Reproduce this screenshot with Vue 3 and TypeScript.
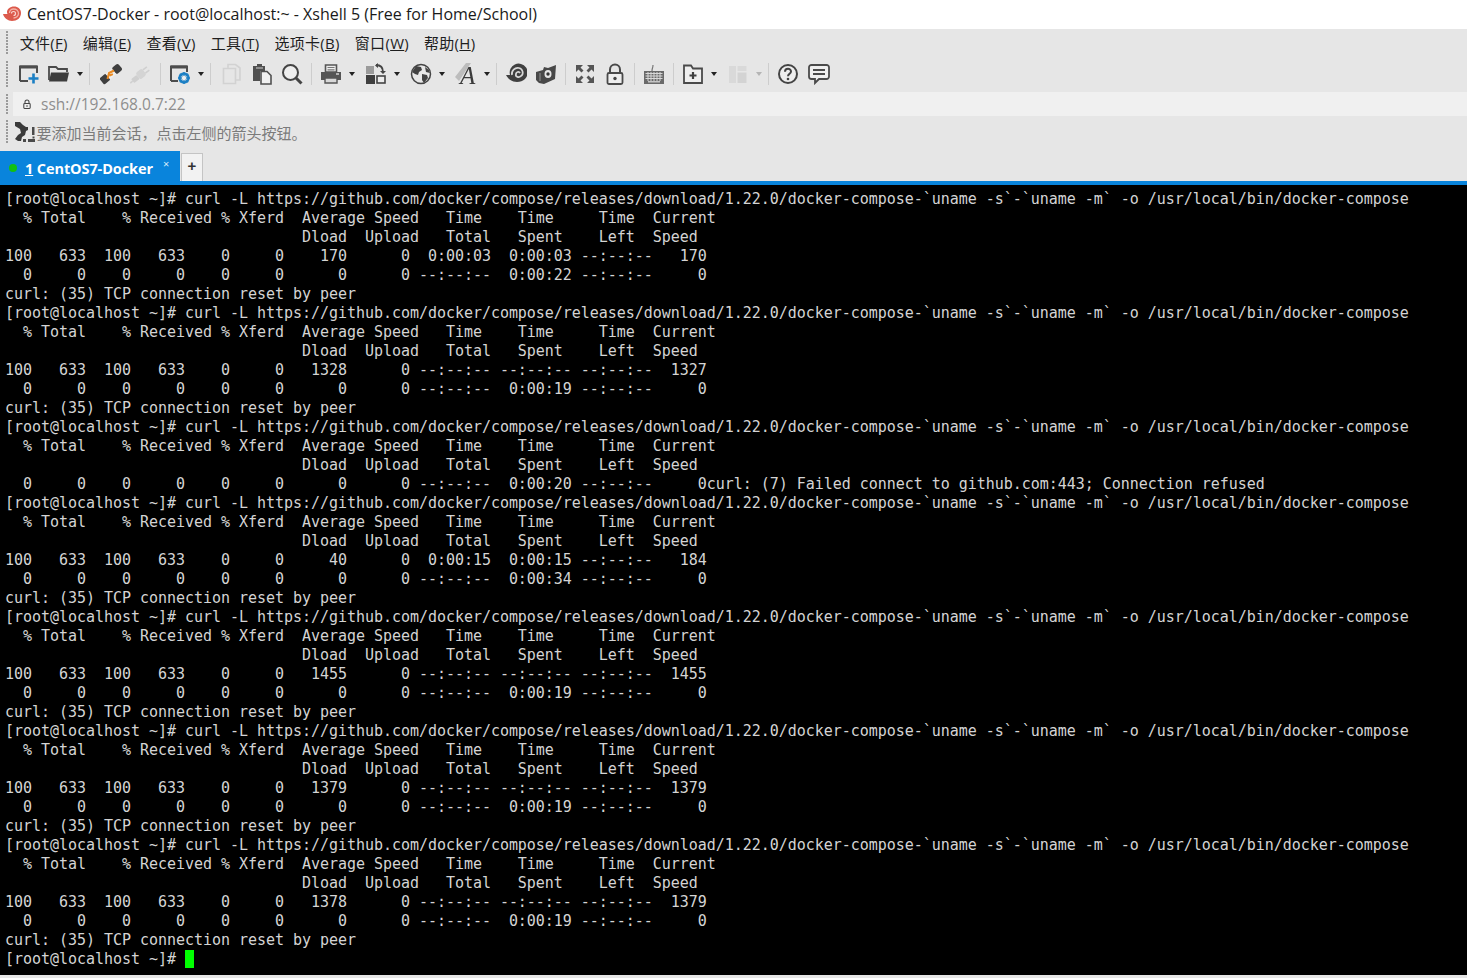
<script setup lang="ts">
const cmd = "[root@localhost ~]# curl -L https://github.com/docker/compose/releases/download/1.22.0/docker-compose-`uname -s`-`uname -m` -o /usr/local/bin/docker-compose";
const h1 = "  % Total    % Received % Xferd  Average Speed   Time    Time     Time  Current";
const h2 = "                                 Dload  Upload   Total   Spent    Left  Speed";
const reset = "curl: (35) TCP connection reset by peer";

function full(dl: string, a: string, b: string, cur: string): string {
  return "100   633  100   633    0     0 " + dl.padStart(6) + "      0 " + a + " " + b + " --:--:-- " + cur.padStart(5);
}
function zero(spent: string): string {
  return "  0     0    0     0    0     0      0      0 --:--:--  " + spent + " --:--:--     0";
}

const none = "--:--:--";
const lines: string[] = [
  cmd, h1, h2, full("170", " 0:00:03", " 0:00:03", "170"), zero("0:00:22"), reset,
  cmd, h1, h2, full("1328", none, none, "1327"), zero("0:00:19"), reset,
  cmd, h1, h2, zero("0:00:20") + "curl: (7) Failed connect to github.com:443; Connection refused",
  cmd, h1, h2, full("40", " 0:00:15", " 0:00:15", "184"), zero("0:00:34"), reset,
  cmd, h1, h2, full("1455", none, none, "1455"), zero("0:00:19"), reset,
  cmd, h1, h2, full("1379", none, none, "1379"), zero("0:00:19"), reset,
  cmd, h1, h2, full("1378", none, none, "1379"), zero("0:00:19"), reset,
];

const menus: { label: string; key: string }[] = [
  { label: "文件", key: "F" },
  { label: "编辑", key: "E" },
  { label: "查看", key: "V" },
  { label: "工具", key: "T" },
  { label: "选项卡", key: "B" },
  { label: "窗口", key: "W" },
  { label: "帮助", key: "H" },
];
</script>

<template>
  <div class="app">
    <header class="title">
      <svg class="logo" width="20" height="16" viewBox="0 0 20 16">
        <path d="M1 8c1 4 5 7 9 7 5 0 9-3 9-8 0-4-3-6.500-7-6.500C8 .5 5 3 5 6c0 .8 .2 1.400 .5 2z" fill="#dc5a4c" />
        <path d="M7.500 7c0-3 2-4 4-4 3 0 5 2 5 4.500S14 12 11.500 12" fill="none" stroke="#f4b3a8" stroke-width="1.300" />
        <path d="M9.500 7.500c0-1.500 1-2 2-2s2 .8 2 2-1 2-2 2" fill="none" stroke="#f8d8d2" stroke-width="1.200" />
      </svg>
      <span>CentOS7-Docker - root@localhost:~ - Xshell 5 (Free for Home/School)</span>
    </header>

    <nav class="menu">
      <i class="handle"></i>
      <span v-for="m in menus" :key="m.key" class="menu-item">{{ m.label }}(<u>{{ m.key }}</u>)</span>
    </nav>

    <div class="toolbar">
      <i class="handle"></i>
      <div class="tools">
        <span class="t"><svg viewBox="0 0 22 22"><path d="M2 18V3.500h17V10M2 18h8" fill="none" stroke="#4d4d4d" stroke-width="2" /><path d="M2 4h17" stroke="#4d4d4d" stroke-width="3" /><path d="M15.500 10.500v10M10.500 15.500h10" stroke="#1b7fc4" stroke-width="2.600" /></svg></span>
        <span class="t"><svg viewBox="0 0 22 22"><path d="M1 17V4h7l2 2h9v3" fill="none" stroke="#4a4a4a" stroke-width="1.800" /><path d="M3 9.500h18l-2 9H1z" fill="#3d3d3d" /></svg></span>
        <span class="c"></span><span class="s w"></span>
        <span class="t"><svg viewBox="0 0 22 22"><g transform="rotate(-40 11 11)"><rect x="-1" y="7" width="8" height="8" rx="1.500" fill="#3f3f3f" /><rect x="15" y="7" width="8" height="8" rx="2" fill="#3f3f3f" /><rect x="7" y="7.500" width="8" height="7" fill="#efefef" /></g><path d="M7.500 16l1.500-6 5-2.500M9.500 12.500l3.400-1.400" fill="none" stroke="#e98a23" stroke-width="2" /></svg></span>
        <span class="t off"><svg viewBox="0 0 22 22"><g transform="rotate(-38 11 11)"><rect x="0" y="9" width="7" height="5" rx="1" fill="#cfcfcf" /><rect x="7" y="7" width="8" height="8" rx="2" fill="#d4d4d4" /><path d="M15 9h5M15 13h5M0 11.500h-3" stroke="#d0d0d0" stroke-width="1.600" /></g></svg></span>
        <span class="s"></span>
        <span class="t"><svg viewBox="0 0 22 22"><path d="M2 18V3.500h16V9M2 18h7" fill="none" stroke="#4d4d4d" stroke-width="2" /><path d="M2 4h16" stroke="#4d4d4d" stroke-width="3" /><circle cx="15" cy="15" r="4.500" fill="none" stroke="#1b7fc4" stroke-width="2.400" /><path d="M15 9v12M9 15h12M10.800 10.800l8.400 8.400M19.200 10.800l-8.400 8.400" stroke="#1b7fc4" stroke-width="1.400" /><circle cx="15" cy="15" r="2.200" fill="#eee" /></svg></span>
        <span class="c"></span><span class="s w"></span>
        <span class="t off"><svg viewBox="0 0 22 22"><path d="M7 5V1.500h7.500L19 5v12h-4" fill="none" stroke="#d2d2d2" stroke-width="1.600" /><path d="M2.500 5.500H14.500V20.500H2.500z" fill="#e6e6e6" stroke="#d2d2d2" stroke-width="1.600" /></svg></span>
        <span class="t"><svg viewBox="0 0 22 22"><path d="M4 3h2V1h5v2h3v5H9v10H2V3z" fill="#505050" /><path d="M5 5h7" stroke="#bbb" stroke-width="1.200" /><path d="M10 8.500h6l4 4v8.500H10z" fill="#f1f1f1" stroke="#505050" stroke-width="1.600" /></svg></span>
        <span class="t"><svg viewBox="0 0 22 22"><circle cx="9.500" cy="9.500" r="7.500" fill="#eeeeee" stroke="#444" stroke-width="2" /><path d="M15 15l5.500 5.500" stroke="#444" stroke-width="3" /></svg></span>
        <span class="s"></span>
        <span class="t"><svg viewBox="0 0 22 22"><path d="M5.500 2h11v7h-11z" fill="#ececec" stroke="#555" stroke-width="1.600" /><path d="M7.500 4.500h7M7.500 6.800h7" stroke="#777" stroke-width="1.200" /><path d="M1 9h20v8H1z" fill="#555" /><path d="M5 15h12v5H5z" fill="#d8d8d8" stroke="#555" stroke-width="1.400" /><path d="M16 11h3" stroke="#ddd" stroke-width="1.400" /></svg></span>
        <span class="c"></span><i class="g"></i>
        <span class="t"><svg viewBox="0 0 22 22"><rect x="1" y="3" width="8" height="8" fill="#9b9b9b" /><rect x="1" y="12" width="9" height="9" fill="#3f3f3f" /><rect x="12" y="13" width="8" height="7" fill="#ececec" stroke="#444" stroke-width="1.600" /><path d="M11 2c4 0 7 2 7 7" fill="none" stroke="#444" stroke-width="1.800" /><path d="M15 8l3 3 3-3zM13 0v5l-3-2.500z" fill="#444" /></svg></span>
        <span class="c"></span><i class="g"></i>
        <span class="t"><svg viewBox="0 0 22 22"><circle cx="11" cy="11" r="9.500" fill="#e8e8e8" stroke="#444" stroke-width="1.500" /><path d="M6 3l5 1 1 3-3 2-1 3-3-1-3-2zM12 11l5 1 1 3-4 5-2-3zM15 4l4 3 1 3-4-1z" fill="#434343" /></svg></span>
        <span class="c"></span><i class="g"></i>
        <span class="t ta"><svg viewBox="0 0 22 22"><path d="M0 14L11 0h5L4 18z" fill="#bdbdbd" /><text x="5" y="21" class="font-a">A</text></svg></span>
        <span class="c"></span><span class="s"></span>
        <span class="t"><svg viewBox="0 0 22 22"><path d="M1 12h4a9 9 0 1 1 15 4c-2 2-5 3-8 3-5 0-9-3-11-7z" fill="#404040" /><path d="M7 12c-1-4 3-8 7-7 4 1 5 6 2 8-2 2-6 1-5-2 0-2 3-3 4-1" fill="none" stroke="#d8d8d8" stroke-width="1.700" /></svg></span>
        <span class="t"><svg viewBox="0 0 22 22"><path d="M1 9l7-2 1-3 4 1 8-3-1 14-11 5-5-1-3-3z" fill="#484848" /><ellipse cx="13" cy="11" rx="3.500" ry="4" fill="#e6e6e6" /><circle cx="13" cy="11" r="1.700" fill="#333" /><path d="M5 10v8" stroke="#888" stroke-width="1.200" /></svg></span>
        <span class="s"></span>
        <span class="t"><svg viewBox="0 0 22 22" fill="#555"><path d="M2 2h7L6.500 4.500l3 3L7.500 9.500l-3-3L2 9zM20 2v7l-2.500-2.500-3 3-2-2 3-3L13 2zM2 20v-7l2.500 2.500 3-3 2 2-3 3L9 20zM20 20h-7l2.500-2.500-3-3 2-2 3 3L20 13z" /></svg></span>
        <span class="t"><svg viewBox="0 0 22 22"><path d="M6 10V6.500a5 5 0 0 1 10 0V10" fill="none" stroke="#4a4a4a" stroke-width="2" /><rect x="3.500" y="10" width="15" height="11" rx="1.500" fill="#eee" stroke="#4a4a4a" stroke-width="1.800" /><circle cx="11" cy="15.500" r="1.700" fill="#444" /></svg></span>
        <span class="s"></span>
        <span class="t"><svg viewBox="0 0 22 22"><path d="M9 8c0-3 1-3 1-6" fill="none" stroke="#777" stroke-width="1.200" /><rect x="1" y="8" width="20" height="13" fill="#6a6a6a" /><path d="M2.500 10.500h17M2.500 13h17M2.500 15.500h17M5 9v9M8 9v9M11 9v9M14 9v9M17 9v9" stroke="#d8d8d8" stroke-width="1" /><path d="M5 18.800h12" stroke="#ddd" stroke-width="1.200" /></svg></span>
        <span class="s"></span>
        <span class="t"><svg viewBox="0 0 22 22"><path d="M2 20V2.500h7l2 3h9V20z" fill="#efefef" stroke="#4a4a4a" stroke-width="1.800" /><path d="M11 9v7M7.500 12.500h7" stroke="#3f3f3f" stroke-width="2.200" /></svg></span>
        <span class="c"></span><i class="g"></i>
        <span class="t off"><svg viewBox="0 0 22 22"><rect x="2" y="3" width="7" height="17" fill="#d9d9d9" /><rect x="10.500" y="3" width="9" height="5" fill="#d9d9d9" /><rect x="10.500" y="9.500" width="9" height="10.500" fill="#d3d3d3" /></svg></span>
        <span class="c dim"></span><span class="s"></span>
        <span class="t"><svg viewBox="0 0 22 22"><circle cx="11" cy="11" r="9" fill="#efefef" stroke="#444" stroke-width="2" /><path d="M8 8.800c0-4 6-4 6-.3 0 2.200-3 2.300-3 4.700" fill="none" stroke="#444" stroke-width="2" /><circle cx="11" cy="16" r="1.300" fill="#444" /></svg></span>
        <span class="t chat"><svg viewBox="0 0 22 22"><path d="M3.500 2h15A2.500 2.500 0 0 1 21 4.500v9a2.500 2.500 0 0 1-2.500 2.500H11l-4 4v-4H3.500A2.500 2.500 0 0 1 1 13.500v-9A2.500 2.500 0 0 1 3.500 2z" fill="#efefef" stroke="#4a4a4a" stroke-width="1.800" /><path d="M5 7h12M5 11h12" stroke="#4a4a4a" stroke-width="1.800" /></svg></span>
      </div>
    </div>

    <div class="address">
      <i class="handle"></i>
      <div class="address-box">
        <svg width="8" height="10" viewBox="0 0 10 12"><path d="M2.500 5.500V3.500a2.500 2.500 0 0 1 5 0v2" fill="none" stroke="#444" stroke-width="1.300" /><rect x="1" y="5.500" width="8" height="6" rx="1" fill="#eee" stroke="#444" stroke-width="1.300" /><circle cx="5" cy="8.500" r="1" fill="#444" /></svg>
        <span>ssh://192.168.0.7:22</span>
      </div>
    </div>

    <div class="hint">
      <i class="handle"></i>
      <svg class="hint-icon" width="20" height="20" viewBox="0 0 20 20"><path d="M0 0h5l3 3 3 2h2v3l-2 1-1 4-3 2-1 4H3l-3-2 3-4 3-2-1-4-5-3z" fill="#3a3a3a" /><path d="M17 5h2.500v8H17zM17.500 14.500h2v2h-2zM13 17h7v3h-7zM8 17h3v3H8z" fill="#4a4a4a" /></svg>
      <span class="hint-text">要添加当前会话，点击左侧的箭头按钮。</span>
    </div>

    <div class="tabs">
      <div class="tab">
        <i class="dot"></i>
        <span class="tab-label"><u>1</u> CentOS7-Docker</span>
        <span class="tab-close">×</span>
      </div>
      <div class="tab-add">+</div>
    </div>

    <main class="term">
      <pre v-for="(line, i) in lines" :key="i">{{ line }}</pre>
      <pre>[root@localhost ~]# <b class="cursor"></b></pre>
    </main>
  </div>
</template>

<style>
html, body { margin: 0; background: #e6e6e6; overflow: hidden; }
</style>

<style scoped>
.app {
  width: 1467px;
  height: 978px;
  display: flex;
  flex-direction: column;
  overflow: hidden;
  background: #e6e6e6;
  font-family: "Open Sans", "Noto Sans CJK SC", sans-serif;
}
.title {
  height: 27px;
  padding-bottom: 2px;
  flex: none;
  background: #fff;
  display: flex;
  align-items: center;
  gap: 5px;
  padding-left: 2px;
  font-size: 16px;
  color: #1a1a1a;
}
.logo { flex: none; }
.handle {
  flex: none;
  display: block;
  width: 2px;
  height: 24px;
  margin-left: 6px;
  background: repeating-linear-gradient(to bottom, #9a9a9a 0 2px, transparent 2px 3px);
}
.menu {
  height: 27px;
  padding-bottom: 2px;
  flex: none;
  display: flex;
  align-items: center;
  font-family: "Open Sans", "Noto Sans CJK SC", sans-serif;
  font-size: 15px;
  color: #1e1e1e;
}
.menu .handle { margin-right: 11.700px; }
.menu-item { margin-right: 15px; white-space: nowrap; letter-spacing: 0.3px; }
.toolbar {
  height: 32px;
  padding-bottom: 2px;
  flex: none;
  display: flex;
  align-items: center;
}
.toolbar .handle { height: 26px; }
.tools { display: flex; align-items: center; height: 100%; margin-left: 6px; }
.t {
  flex: none;
  width: 30px;
  height: 22px;
  display: flex;
  align-items: center;
  justify-content: center;
}
.t svg { width: 22px; height: 22px; display: block; filter: blur(0.35px); }
.ta svg { overflow: visible; }
.chat { margin-left: 1px; }
.c {
  flex: none;
  width: 11px;
  height: 22px;
  position: relative;
}
.c::after {
  content: "";
  position: absolute;
  left: 3px;
  top: 9px;
  border-left: 3.5px solid transparent;
  border-right: 3.5px solid transparent;
  border-top: 4px solid #222;
}
.c.dim::after { border-top-color: #b5b5b5; }
.s {
  flex: none;
  width: 9px;
  height: 24px;
  position: relative;
}
.s.w { width: 11px; }
.s::after {
  content: "";
  position: absolute;
  left: 4px;
  top: 1px;
  bottom: 1px;
  width: 1px;
  background: #cdcdcd;
}
.g { flex: none; width: 4px; }
.font-a {
  font-family: "Liberation Serif", serif;
  font-style: italic;
  font-size: 25px;
  fill: #3b3b3b;
}
.address {
  height: 24px;
  flex: none;
  display: flex;
  align-items: center;
}
.address .handle { height: 20px; }
.address-box {
  flex: 1;
  margin-left: 5px;
  height: 24px;
  background: #f0f0f0;
  display: flex;
  align-items: center;
  gap: 10px;
  padding-left: 10px;
  font-size: 15.5px;
  color: #8e8e8e;
}
.hint {
  height: 32px;
  padding-bottom: 2px;
  flex: none;
  display: flex;
  align-items: center;
  font-family: "Noto Sans CJK SC", sans-serif;
  font-size: 15px;
  color: #7b7b7b;
}
.hint .handle { margin-right: 7px; }
.hint-icon { filter: blur(0.6px); }
.hint-text { margin-left: 1.500px; }
.tabs {
  height: 31px;
  flex: none;
  display: flex;
  align-items: flex-end;
}
.tab {
  width: 180px;
  height: 30px;
  background: #0984dc;
  color: #fff;
  display: flex;
  align-items: center;
  position: relative;
  font-size: 14.5px;
  font-weight: 700;
}
.dot {
  display: block;
  width: 8px;
  height: 8px;
  margin: 3px 0 0 9px;
  border-radius: 50%;
  background: #12c012;
}
.tab-label { margin-left: 8px; padding-top: 4px; white-space: nowrap; letter-spacing: -0.1px; }
.tab-close {
  position: absolute;
  left: 163px;
  top: 5px;
  font-size: 11px;
  font-weight: 400;
  color: #d8ecfb;
}
.tab-add {
  width: 20px;
  height: 27px;
  margin-left: 1px;
  border: 1px solid #c4c4c4;
  border-bottom: 0;
  background: #f2f2f2;
  color: #333;
  font: 700 15px/24px "Liberation Sans", sans-serif;
  text-align: center;
}
.term {
  flex: 1;
  background: #000;
  border-top: 4px solid #0984dc;
  margin-bottom: 3px;
  padding: 5px 0 0 5px;
  overflow: hidden;
}
.term pre {
  margin: 0;
  height: 19px;
  font-family: "DejaVu Sans Mono", monospace;
  font-size: 15px;
  line-height: 19px;
  letter-spacing: -0.033px;
  color: #d4d4d4;
  white-space: pre;
}
.cursor {
  display: inline-block;
  width: 9px;
  height: 18px;
  vertical-align: top;
  background: #00ff00;
}
</style>
